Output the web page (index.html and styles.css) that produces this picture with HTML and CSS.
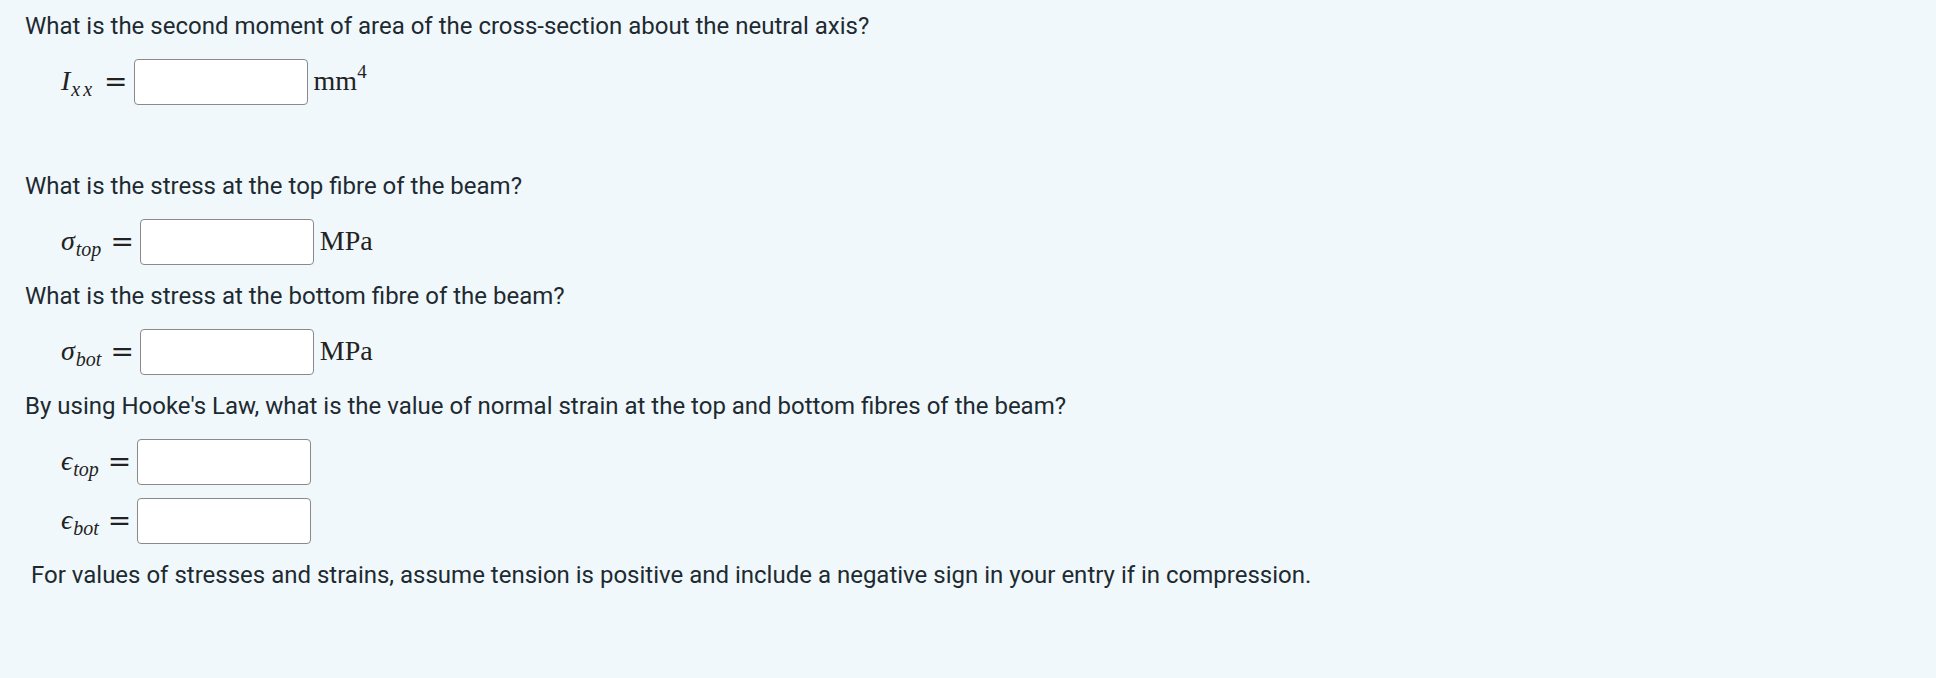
FILE: index.html
```html
<!DOCTYPE html>
<html lang="en">
<head>
<meta charset="utf-8">
<title>Beam questions</title>
<link rel="stylesheet" href="styles.css">
</head>
<body>
<div class="page">
  <p class="q">What is the second moment of area of the cross-section about the neutral axis?</p>
  <div class="row spaced">
    <span class="lbl"><span class="mi">I</span><span class="sub mi xx">xx</span></span>
    <span class="eq">=</span>
    <input class="box" type="text" aria-label="Ixx">
    <span class="unit">mm<sup>4</sup></span>
  </div>

  <p class="q">What is the stress at the top fibre of the beam?</p>
  <div class="row">
    <span class="lbl"><span class="mi">σ</span><span class="sub mi">top</span></span>
    <span class="eq">=</span>
    <input class="box" type="text" aria-label="sigma top">
    <span class="unit">MPa</span>
  </div>

  <p class="q">What is the stress at the bottom fibre of the beam?</p>
  <div class="row">
    <span class="lbl"><span class="mi">σ</span><span class="sub mi">bot</span></span>
    <span class="eq">=</span>
    <input class="box" type="text" aria-label="sigma bot">
    <span class="unit">MPa</span>
  </div>

  <p class="q">By using Hooke's Law, what is the value of normal strain at the top and bottom fibres of the beam?</p>
  <div class="row">
    <span class="lbl"><span class="mi">ϵ</span><span class="sub mi">top</span></span>
    <span class="eq">=</span>
    <input class="box" type="text" aria-label="epsilon top">
  </div>
  <div class="row">
    <span class="lbl"><span class="mi">ϵ</span><span class="sub mi">bot</span></span>
    <span class="eq">=</span>
    <input class="box" type="text" aria-label="epsilon bot">
  </div>

  <p class="q note">For values of stresses and strains, assume tension is positive and include a negative sign in your entry if in compression.</p>
</div>
</body>
</html>
```

FILE: styles.css
```css
html, body {
  margin: 0;
  padding: 0;
  background: #f0f8fb;
}

.page {
  display: flex;
  flex-direction: column;
  align-items: flex-start;
  padding: 10px 0 0 25px;
  font-family: Roboto, "Liberation Sans", sans-serif;
  color: #1e2a31;
}

.q {
  margin: 0;
  font-size: 24px;
  line-height: 33px;
}

.row {
  display: flex;
  align-items: flex-start;
  height: 46px;
  margin: 16px 0 0 36px;
  font-family: "Liberation Serif", "DejaVu Serif", serif;
  font-size: 28px;
  color: #222;
}

.row + .row {
  margin-top: 13px;
}

.row + .q {
  margin-top: 15px;
}

.row.spaced + .q {
  margin-top: 65px;
}

.lbl,
.eq,
.unit {
  display: block;
  height: 46px;
  line-height: 44px;
  white-space: nowrap;
}

.mi {
  font-style: italic;
}

.sub {
  font-size: 20px;
  line-height: 0;
  vertical-align: -6px;
  margin-left: 1px;
}

.sub.xx {
  letter-spacing: 3px;
}

.eq {
  font-family: "DejaVu Serif", serif;
  margin: 0 6px 0 9px;
  padding-top: 1px;
}

.box {
  display: block;
  width: 174px;
  height: 46px;
  box-sizing: border-box;
  margin: 0;
  padding: 0 8px;
  border: 1px solid #8a8a8a;
  border-radius: 4px;
  background: #ffffff;
  font: 20px Roboto, sans-serif;
}

.unit {
  margin-left: 6px;
}

.unit sup {
  font-size: 19px;
  line-height: 0;
  vertical-align: 12px;
  margin-left: 0;
}

.note {
  padding-left: 6px;
}
```
